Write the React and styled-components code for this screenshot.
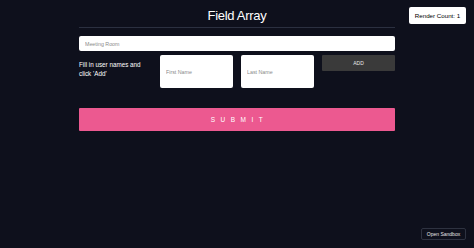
import React from "react";
import styled, { createGlobalStyle } from "styled-components";

const Global = createGlobalStyle`
  html, body { margin: 0; padding: 0; background: #0e101c; }
  body { font-family: "Liberation Sans", Arial, sans-serif; color: #fff; width: 474px; height: 248px; overflow: hidden; }
  * { box-sizing: border-box; }
`;

const Page = styled.div`
  position: relative;
  width: 474px;
  height: 248px;
  background: #0e101c;
`;

const Form = styled.form`
  width: 316px;
  margin: 0 auto;
  padding-top: 8px;
  display: flex;
  flex-direction: column;
`;

const Title = styled.h1`
  margin: 0;
  font-size: 13px;
  font-weight: 400;
  letter-spacing: -0.3px;
  text-align: center;
  line-height: 16px;
  padding-bottom: 3px;
  border-bottom: 1px solid #2b3040;
`;

const TextInput = styled.input`
  display: block;
  width: 100%;
  height: ${(p) => p.$h}px;
  border: none;
  border-radius: 2px;
  background: #fff;
  padding: 0 6px;
  font-family: inherit;
  font-size: 5.3px;
  color: #333;
  outline: none;
  &::placeholder { color: #8a8a8a; }
`;

const TopInput = styled(TextInput)`
  margin-top: 8px;
`;

const Row = styled.div`
  margin-top: 4px;
  display: grid;
  grid-template-columns: repeat(4, 1fr);
  column-gap: 8px;
  align-items: start;
`;

const Label = styled.p`
  margin: 6px 0 0;
  font-size: 6.3px;
  line-height: 8.5px;
  color: #fff;
`;

const AddButton = styled.button`
  height: 16px;
  border: none;
  border-radius: 1px;
  background: #3a3a3a;
  color: #e8e8e8;
  font-family: inherit;
  font-size: 5px;
  text-transform: uppercase;
  padding: 0;
`;

const Submit = styled.button`
  margin-top: 20px;
  height: 23px;
  border: none;
  border-radius: 1px;
  background: #ec5990;
  color: #fff;
  font-family: inherit;
  font-size: 6.5px;
  letter-spacing: 5.5px;
  text-transform: uppercase;
  padding: 0 0 0 5px;
`;

const RenderCount = styled.div`
  position: absolute;
  top: 7px;
  left: 409px;
  width: 57px;
  height: 17px;
  background: #fff;
  color: #000;
  border-radius: 2px;
  font-size: 6.2px;
  display: flex;
  align-items: center;
  justify-content: center;
`;

const Sandbox = styled.a`
  position: absolute;
  left: 421px;
  top: 228px;
  width: 45px;
  height: 12px;
  border: 1px solid #2e3240;
  border-radius: 2px;
  color: #e6e6e6;
  font-size: 5px;
  display: flex;
  align-items: center;
  justify-content: center;
  background: #0e101c;
`;

export default function App() {
  return (
    <Page>
      <Global />
      <Form onSubmit={(e) => e.preventDefault()}>
        <Title>Field Array</Title>
        <TopInput $h={15} placeholder="Meeting Room" />
        <Row>
          <Label>Fill in user names and click 'Add'</Label>
          <TextInput $h={33} placeholder="First Name" />
          <TextInput $h={33} placeholder="Last Name" />
          <AddButton type="button">Add</AddButton>
        </Row>
        <Submit type="submit">Submit</Submit>
      </Form>
      <RenderCount>Render Count: 1</RenderCount>
      <Sandbox>Open Sandbox</Sandbox>
    </Page>
  );
}
